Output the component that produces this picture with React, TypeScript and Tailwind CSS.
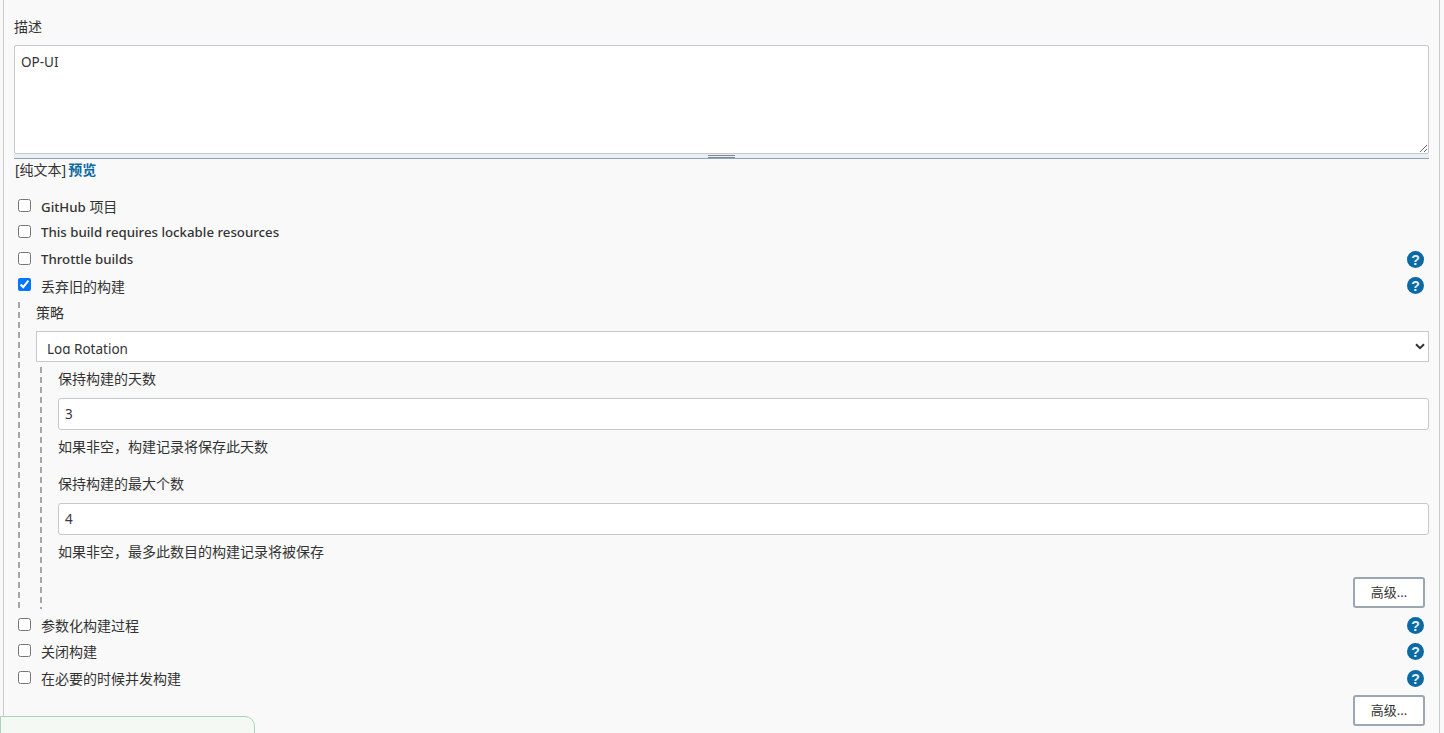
const FONT = "font-['Noto_Sans','Noto_Sans_CJK_SC',sans-serif]";
const DASHES = "bg-[repeating-linear-gradient(to_bottom,#a6a6a6_0,#a6a6a6_6px,transparent_6px,transparent_10px)] bg-[length:2px_100%] bg-no-repeat";

function HelpIcon() {
  return (
    <svg width="17" height="17" viewBox="0 0 17 17" className="shrink-0">
      <circle cx="8.5" cy="8.5" r="8.5" fill="#0b6aa2" />
      <text x="8.5" y="13.5" textAnchor="middle" fontSize="14" fontWeight="700" fill="#e8f1f7" fontFamily="Liberation Sans, sans-serif">
        ?
      </text>
    </svg>
  );
}

function OptionRow({ label, suffix, checked, help, bold, lower, height }: { label: string; suffix?: string; checked?: boolean; help?: boolean; bold?: boolean; lower?: boolean; height: string }) {
  return (
    <div className={`flex items-center ${height}`}>
      <input
        type="checkbox"
        defaultChecked={checked}
        className={`ml-[18px] w-[13px] h-[13px] m-0 accent-[#0075ff] ${lower ? "-translate-y-[2px]" : "-translate-y-[3px]"}`}
      />
      <span className={`ml-[10px] text-[#333] -translate-y-[1px] ${bold ? "text-[13.25px] font-medium" : "text-[14px]"}`}>
        {label}
        {suffix && <span className="text-[14px] font-normal"> {suffix}</span>}
      </span>
      {help && (
        <div className={`ml-auto mr-[15px] ${lower ? "-translate-y-[1px]" : "-translate-y-[2px]"}`}>
          <HelpIcon />
        </div>
      )}
    </div>
  );
}

function AdvancedButton() {
  return (
    <button className="w-[72px] h-[31px] shrink-0 bg-white border-2 border-[#9aa7b2] rounded-[3px] pt-[1px] text-[13px] text-[#333]">
      高级...
    </button>
  );
}

function NumberField({ label, value, help }: { label: string; value: string; help: string }) {
  return (
    <div>
      <div className="h-[19px] leading-[19px] text-[14px] text-[#333]">{label}</div>
      <input
        defaultValue={value}
        className="block mt-[10px] w-full h-[32px] bg-white border border-[#c4c8cc] rounded-[3px] px-[6px] text-[13.5px] text-[#3d3345] outline-none"
      />
      <div className="mt-[7px] h-[19px] leading-[19px] text-[14px] text-[#333]">{help}</div>
    </div>
  );
}

export default function App() {
  return (
    <div className={`relative w-[1444px] h-[733px] overflow-hidden bg-[#f9f9f9] ${FONT}`}>
      <div className="ml-[3px] mr-[4px] h-full border-x border-[#c8cccc] pl-[10px] pr-[10px]">
        <div className="pt-[17px] h-[45px] text-[14px] leading-[19px] text-[#333]">描述</div>
        <textarea
          defaultValue="OP-UI"
          className="block w-full h-[109px] bg-white border border-[#c6c9cc] rounded-[2px] px-[6px] py-[6px] text-[13.5px] leading-[20px] text-[#333] outline-none"
        />
        <div className="flex flex-col items-center justify-center gap-[1px] h-[5px] bg-[#e9eff2] border-b border-[#8fa3b3]">
          <div className="w-[27px] h-[1px] bg-[#7e8a8e]" />
          <div className="w-[27px] h-[1px] bg-[#7e8a8e]" />
        </div>
        <div className="h-[21px] leading-[21px] text-[14px] text-[#333] pl-[1px]">
          [纯文本]<span className="ml-[2px] font-semibold text-[#0b6aa2]">预览</span>
        </div>

        <div className="mt-[15px] -ml-[14px] -mr-[10px]">
          <OptionRow label="GitHub" suffix="项目" bold height="h-[26px]" />
          <OptionRow label="This build requires lockable resources" bold height="h-[26px]" />
          <OptionRow label="Throttle builds" bold help height="h-[28px]" />
          <OptionRow label="丢弃旧的构建" checked help height="h-[25px]" />
        </div>

        <div className={`mt-[2px] ml-[4px] pl-[18px] h-[306px] ${DASHES}`}>
          <div className="pt-[1px] h-[26px] leading-[19px] text-[14px] text-[#333]">策略</div>
          <div className="relative mt-[3px]">
            <select className="block w-full h-[31px] appearance-none bg-white border border-[#c6c9cc] pl-[10px] pt-[9px] pb-[7px] text-[13.5px] leading-[16px] text-[#333] outline-none">
              <option>Log Rotation</option>
            </select>
            <svg width="10" height="7" viewBox="0 0 10 7" className="absolute right-[4px] top-[12px]">
              <path d="M1 1.2 5 5.2 9 1.2" fill="none" stroke="#333" strokeWidth="2" />
            </svg>
          </div>
          <div className={`mt-[5px] ml-[4px] pl-[18px] h-[242px] ${DASHES}`}>
            <div className="pt-[2px]">
              <NumberField label="保持构建的天数" value="3" help="如果非空，构建记录将保存此天数" />
            </div>
            <div className="mt-[18px]">
              <NumberField label="保持构建的最大个数" value="4" help="如果非空，最多此数目的构建记录将被保存" />
            </div>
            <div className="mt-[16px] flex justify-end pr-[4px]">
              <AdvancedButton />
            </div>
          </div>
        </div>

        <div className="mt-[5px] -ml-[14px] -mr-[10px]">
          <OptionRow label="参数化构建过程" help lower height="h-[26px]" />
          <OptionRow label="关闭构建" help lower height="h-[26px]" />
          <OptionRow label="在必要的时候并发构建" help lower height="h-[28px]" />
        </div>
        <div className="mt-[2px] flex justify-end pr-[4px]">
          <AdvancedButton />
        </div>
      </div>

      <div className="absolute left-0 top-[716px] w-[255px] h-[40px] bg-[#f4f9f3] border border-[#a9d4b8] rounded-tr-[10px]" />
    </div>
  );
}
